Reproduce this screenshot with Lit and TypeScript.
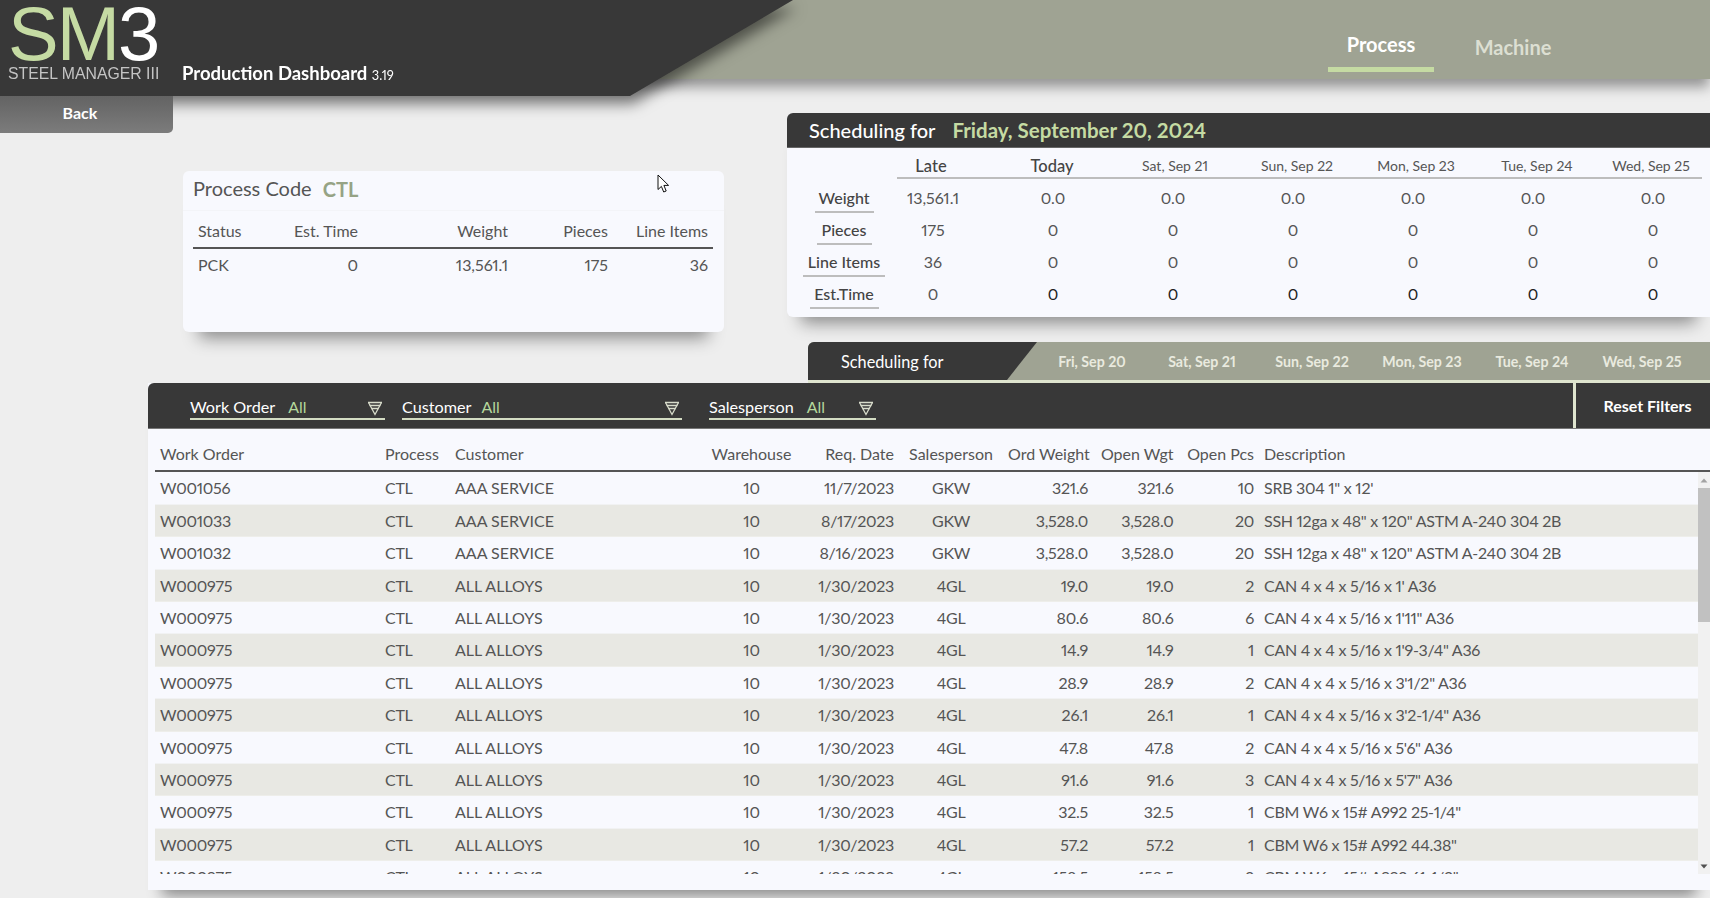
import {html, css, LitElement, svg} from 'lit';
import {customElement} from 'lit/decorators.js';

interface WorkRow {
  order: string;
  customer: string;
  date: string;
  person: string;
  ord: string;
  pcs: string;
  desc: string;
}

const aaa = 'AAA SERVICE';
const all = 'ALL ALLOYS';
const ssh = 'SSH 12ga x 48" x 120" ASTM A-240 304 2B';

const rows: WorkRow[] = [
  {order: 'W001056', customer: aaa, date: '11/7/2023', person: 'GKW', ord: '321.6', pcs: '10', desc: 'SRB 304 1" x 12\''},
  {order: 'W001033', customer: aaa, date: '8/17/2023', person: 'GKW', ord: '3,528.0', pcs: '20', desc: ssh},
  {order: 'W001032', customer: aaa, date: '8/16/2023', person: 'GKW', ord: '3,528.0', pcs: '20', desc: ssh},
  {order: 'W000975', customer: all, date: '1/30/2023', person: '4GL', ord: '19.0', pcs: '2', desc: 'CAN 4 x 4 x 5/16 x 1\' A36'},
  {order: 'W000975', customer: all, date: '1/30/2023', person: '4GL', ord: '80.6', pcs: '6', desc: 'CAN 4 x 4 x 5/16 x 1\'11" A36'},
  {order: 'W000975', customer: all, date: '1/30/2023', person: '4GL', ord: '14.9', pcs: '1', desc: 'CAN 4 x 4 x 5/16 x 1\'9-3/4" A36'},
  {order: 'W000975', customer: all, date: '1/30/2023', person: '4GL', ord: '28.9', pcs: '2', desc: 'CAN 4 x 4 x 5/16 x 3\'1/2" A36'},
  {order: 'W000975', customer: all, date: '1/30/2023', person: '4GL', ord: '26.1', pcs: '1', desc: 'CAN 4 x 4 x 5/16 x 3\'2-1/4" A36'},
  {order: 'W000975', customer: all, date: '1/30/2023', person: '4GL', ord: '47.8', pcs: '2', desc: 'CAN 4 x 4 x 5/16 x 5\'6" A36'},
  {order: 'W000975', customer: all, date: '1/30/2023', person: '4GL', ord: '91.6', pcs: '3', desc: 'CAN 4 x 4 x 5/16 x 5\'7" A36'},
  {order: 'W000975', customer: all, date: '1/30/2023', person: '4GL', ord: '32.5', pcs: '1', desc: 'CBM W6 x 15# A992 25-1/4"'},
  {order: 'W000975', customer: all, date: '1/30/2023', person: '4GL', ord: '57.2', pcs: '1', desc: 'CBM W6 x 15# A992 44.38"'},
  {order: 'W000975', customer: all, date: '1/30/2023', person: '4GL', ord: '158.5', pcs: '3', desc: 'CBM W6 x 15# A992 61-1/2"'},
];

const schedHead = ['Late', 'Today', 'Sat, Sep 21', 'Sun, Sep 22', 'Mon, Sep 23', 'Tue, Sep 24', 'Wed, Sep 25'];
const tabDays = ['Fri, Sep 20', 'Sat, Sep 21', 'Sun, Sep 22', 'Mon, Sep 23', 'Tue, Sep 24', 'Wed, Sep 25'];
const schedRows = [
  {label: 'Weight', cls: 'w-weight', late: '13,561.1', rest: '0.0'},
  {label: 'Pieces', cls: 'w-pieces', late: '175', rest: '0'},
  {label: 'Line Items', cls: 'w-items', late: '36', rest: '0'},
  {label: 'Est.Time', cls: 'w-time', late: '0', rest: '0'},
];

const funnel = svg`<svg class="funnel" width="16" height="15" viewBox="0 0 16 15" fill="none">
  <path d="M1 1.5h14M2.6 4.5h10.8M4.4 7.5h7.2" stroke="#d8dccb" stroke-width="1.6"/>
  <path d="M1.5 1.5 8 13.5 14.5 1.5" stroke="#d8dccb" stroke-width="1.3"/>
</svg>`;

@customElement('app-root')
export class AppRoot extends LitElement {
  static styles = css`
    :host {
      display: block;
      position: relative;
      width: 1710px;
      height: 898px;
      overflow: hidden;
      background: #eeeeee;
      font-family: Lato, "Open Sans", sans-serif;
      font-variant-numeric: proportional-nums;
      color: #555;
    }
    * { box-sizing: border-box; }

    /* header */
    .header {
      position: relative;
      height: 96px;
      z-index: 3;
    }
    .olive {
      height: 79px;
      background: #9fa393;
      box-shadow: 0 9px 12px -1px rgba(0, 0, 0, 0.38);
      display: flex;
      justify-content: flex-end;
      align-items: flex-start;
    }
    .nav { display: flex; width: 382px; }
    .nav-item {
      height: 72px;
      font-size: 20px;
      font-weight: 700;
      color: #dcdfd2;
      display: flex;
      align-items: center;
      justify-content: center;
      padding-top: 22px;
      width: 106px;
    }
    .nav-item.on {
      color: #fff;
      border-bottom: 5px solid #c5dba3;
      padding-top: 20px;
    }
    .nav-item + .nav-item { margin-left: 26px; }
    .dark-wrap {
      position: absolute;
      left: 0;
      top: 0;
      width: 800px;
      height: 96px;
      filter: drop-shadow(3px 8px 7px rgba(0, 0, 0, 0.5));
    }
    .dark {
      height: 96px;
      background: #383838;
      clip-path: polygon(0 0, 793px 0, 630px 96px, 0 96px);
      display: flex;
      align-items: flex-start;
    }
    .logo { width: 182px; padding-left: 8px; flex: none; }
    .sm3 {
      font-family: "Liberation Sans", Arial, sans-serif;
      font-size: 76px;
      line-height: 66px;
      height: 67px;
      padding-top: 1px;
      letter-spacing: -2px;
      color: #fff;
      white-space: nowrap;
    }
    .sm3 span { color: #c5dba3; }
    .steel {
      font-family: "Liberation Sans", Arial, sans-serif;
      font-size: 15.8px;
      line-height: 14px;
      color: #c4c4c4;
      white-space: nowrap;
    }
    .title {
      margin-top: 62px;
      font-size: 18.5px;
      font-weight: 700;
      color: #fff;
      white-space: nowrap;
      line-height: 22px;
    }
    .title small { font-size: 12.8px; font-weight: 400; margin-left: 0; }

    /* upper part */
    .upper {
      display: grid;
      grid-template-columns: 787px 923px;
      height: 287px;
    }
    .back {
      width: 173px;
      height: 37px;
      background: linear-gradient(#636363, #7c7c7c);
      border-bottom-right-radius: 5px;
      color: #fff;
      font-weight: 700;
      font-size: 16px;
      display: flex;
      align-items: center;
      justify-content: center;
      padding: 0 13px 4px 0;
      position: relative;
      z-index: 4;
    }
    .card {
      margin: 38px 0 0 183px;
      width: 541px;
      height: 161px;
      background: #f8f9fe;
      border-radius: 6px;
      box-shadow: 0 22px 16px -16px rgba(0, 0, 0, 0.42);
    }
    .card-title {
      height: 40px;
      border-bottom: 1px solid #f3f4f8;
      padding: 0 10px 6px;
      display: flex;
      align-items: center;
      gap: 11px;
      font-size: 20px;
    }
    .card-title b { color: #96a385; font-weight: 700; padding-top: 2px; }
    .card-grid {
      display: grid;
      grid-template-columns: 90px 80px 150px 100px 100px;
      margin: 10px 11px 0 10px;
      font-size: 16px;
      line-height: 20px;
    }
    .card-grid div { padding: 0 5px; text-align: right; }
    .card-grid .l { text-align: left; }
    .card-rule {
      grid-column: 1 / -1;
      height: 2px;
      background: #555;
      margin: 6px 0 6px;
    }
    .right { padding-top: 17px; }
    .sched {
      height: 204px;
      background: #f8f9fe;
      border-radius: 6px 0 0 6px;
      box-shadow: 0 20px 16px -14px rgba(0, 0, 0, 0.42);
    }
    .sched-title {
      height: 35px;
      background: #383838;
      border-radius: 6px 0 0 0;
      border-bottom: 1px solid #666;
      color: #fff;
      font-size: 20px;
      font-weight: 500;
      display: flex;
      align-items: center;
      gap: 17px;
      padding: 0 0 1px 22px;
    }
    .sched-title span { color: #c5dba3; font-weight: 700; font-size: 20.5px; }
    .sched-head {
      display: grid;
      grid-template-columns: 120px 122px 124px 120px 118px 124px 104px;
      margin-left: 84px;
      height: 29px;
      align-items: end;
      text-align: center;
      font-size: 14px;
      padding-bottom: 1px;
      line-height: 20px;
    }
    .sched-head .big { font-size: 16.5px; font-weight: 500; color: #444; }
    .sched-rule {
      height: 2px;
      background: #bdbdbd;
      margin: 0 8px 2px 110px;
    }
    .sched-row {
      display: grid;
      grid-template-columns: 86px 120px 120px 120px 120px 120px 120px 120px;
      height: 32px;
      align-items: center;
      text-align: center;
      font-size: 16px;
    }
    .sched-label {
      justify-self: center;
      align-self: end;
      margin-left: 28px;
      font-weight: 500;
      color: #444;
      border-bottom: 2px solid #bdbdbd;
      line-height: 22px;
      padding-bottom: 2px;
      text-align: center;
      white-space: nowrap;
    }
    .w-weight { width: 59px; }
    .w-pieces { width: 55px; }
    .w-items { width: 82px; }
    .w-time { width: 69px; }
    .sched-row.strong .v { color: #222; }
    .tabs {
      margin: 25px 0 0 21px;
      height: 41px;
      background: #9fa393;
      border-bottom: 3px solid #dfe5cf;
      border-radius: 6px 0 0 0;
      display: flex;
    }
    .tab-lead {
      width: 229px;
      background: #383838;
      clip-path: polygon(0 0, 229px 0, 199px 38px, 0 38px);
      border-radius: 6px 0 0 0;
      color: #fff;
      font-size: 16.3px;
      display: flex;
      align-items: center;
      padding-left: 33px;
      flex: none;
    }
    .tab-day {
      width: 110px;
      text-align: center;
      color: #e9eadf;
      font-weight: 700;
      font-size: 14.2px;
      line-height: 40px;
      white-space: nowrap;
      flex: none;
    }

    /* work order panel */
    .panel {
      margin-left: 148px;
      height: 507px;
      background: #f8f9fe;
      box-shadow: 0 20px 14px -14px rgba(0, 0, 0, 0.42);
    }
    .filters {
      height: 46px;
      background: #383838;
      border-radius: 6px 0 0 0;
      border-bottom: 1px solid #777;
      display: flex;
      align-items: stretch;
      color: #fff;
    }
    .filter {
      margin-top: 12px;
      height: 25px;
      border-bottom: 2px solid #d3dcc3;
      display: flex;
      align-items: center;
      font-size: 16.2px;
      position: relative;
      white-space: nowrap;
    }
    .filter em {
      font-style: normal;
      color: #b4d79b;
      margin-left: 13px;
      font-size: 16px;
    }
    .f-customer em { margin-left: 10px; }
    .funnel { position: absolute; right: 2px; top: 6px; }
    .f-order { margin-left: 42px; width: 195px; }
    .f-customer { margin-left: 17px; width: 280px; }
    .f-person { margin-left: 27px; width: 167px; }
    .reset {
      margin-left: auto;
      width: 137px;
      border-left: 3px solid #dfe5cf;
      display: flex;
      align-items: center;
      justify-content: center;
      padding-left: 9px;
      font-weight: 700;
      font-size: 16px;
    }
    .cols {
      display: grid;
      grid-template-columns: 225px 70px 252px 99px 98px 104px 90px 85.5px 80.5px 1fr;
      font-size: 16px;
      white-space: nowrap;
    }
    .cols > div { padding: 0 5px; }
    .r { text-align: right; }
    .c { text-align: center; }
    .table-head {
      margin-left: 7px;
      height: 43px;
      align-items: center;
      padding-top: 8px;
      border-bottom: 2px solid #555;
    }
    .scroll {
      display: flex;
      height: 402px;
      overflow: hidden;
      margin-left: 7px;
      margin-top: 0.4px;
    }
    .body { width: 1543px; overflow: hidden; }
    .row {
      height: 32.4px;
      line-height: 32px;
      letter-spacing: -0.28px;
      border-bottom: 1px solid #f1f2f3;
    }
    .row .name { letter-spacing: 0; }
    .row.alt { background: #e8e8e3; border-bottom-color: #eeeeea; }
    .bar {
      width: 12px;
      height: 402px;
      background: #f1f1f1;
      display: flex;
      flex-direction: column;
      align-items: center;
      flex: none;
    }
    .bar .arrow { height: 16px; display: flex; align-items: center; justify-content: center; flex: none; }
    .thumb { height: 134px; width: 12px; background: #c1c1c1; flex: none; }
    .spacer { flex: 1; }

    .cursor { position: absolute; left: 657px; top: 174px; z-index: 9; }
  `;

  render() {
    return html`
      <div class="header">
        <div class="olive">
          <div class="nav">
            <div class="nav-item on">Process</div>
            <div class="nav-item">Machine</div>
          </div>
        </div>
        <div class="dark-wrap">
          <div class="dark">
            <div class="logo">
              <div class="sm3"><span>SM</span>3</div>
              <div class="steel">STEEL MANAGER III</div>
            </div>
            <div class="title">Production Dashboard <small>3.19</small></div>
          </div>
        </div>
      </div>

      <div class="upper">
        <div>
          <div class="back">Back</div>
          <div class="card">
            <div class="card-title">Process Code <b>CTL</b></div>
            <div class="card-grid">
              <div class="l">Status</div><div>Est. Time</div><div>Weight</div><div>Pieces</div><div>Line Items</div>
              <div class="card-rule"></div>
              <div class="l">PCK</div><div>0</div><div>13,561.1</div><div>175</div><div>36</div>
            </div>
          </div>
        </div>
        <div class="right">
          <div class="sched">
            <div class="sched-title">Scheduling for <span>Friday, September 20, 2024</span></div>
            <div class="sched-head">
              ${schedHead.map((h, i) => html`<div class=${i < 2 ? 'big' : ''}>${h}</div>`)}
            </div>
            <div class="sched-rule"></div>
            ${schedRows.map((r, i) => html`
              <div class="sched-row ${i === 3 ? 'strong' : ''}">
                <div class="sched-label ${r.cls}">${r.label}</div>
                <div>${r.late}</div>
                ${[0, 1, 2, 3, 4, 5].map(() => html`<div class="v">${r.rest}</div>`)}
              </div>`)}
          </div>
          <div class="tabs">
            <div class="tab-lead">Scheduling for</div>
            ${tabDays.map(d => html`<div class="tab-day">${d}</div>`)}
          </div>
        </div>
      </div>

      <div class="panel">
        <div class="filters">
          <div class="filter f-order">Work Order<em>All</em>${funnel}</div>
          <div class="filter f-customer">Customer<em>All</em>${funnel}</div>
          <div class="filter f-person">Salesperson<em>All</em>${funnel}</div>
          <div class="reset">Reset Filters</div>
        </div>
        <div class="cols table-head">
          <div>Work Order</div><div>Process</div><div>Customer</div><div class="c">Warehouse</div>
          <div class="r">Req. Date</div><div class="c">Salesperson</div><div class="r">Ord Weight</div>
          <div class="r">Open Wgt</div><div class="r">Open Pcs</div><div>Description</div>
        </div>
        <div class="scroll">
          <div class="body">
            ${rows.map((r, i) => html`
              <div class="cols row ${i % 2 ? 'alt' : ''}">
                <div>${r.order}</div><div>CTL</div><div class="name">${r.customer}</div><div class="c">10</div>
                <div class="r">${r.date}</div><div class="c">${r.person}</div><div class="r">${r.ord}</div>
                <div class="r">${r.ord}</div><div class="r">${r.pcs}</div><div>${r.desc}</div>
              </div>`)}
          </div>
          <div class="bar">
            <div class="arrow"><svg width="8" height="5" viewBox="0 0 8 5"><path d="M4 0.5 7.5 4.5H.5z" fill="#a3a3a3"/></svg></div>
            <div class="thumb"></div>
            <div class="spacer"></div>
            <div class="arrow"><svg width="8" height="5" viewBox="0 0 8 5"><path d="M.5 .5H7.5L4 4.5z" fill="#505050"/></svg></div>
          </div>
        </div>
      </div>

      <svg class="cursor" width="13" height="20" viewBox="0 0 13 20">
        <path d="M1 1V15.5L4.4 12.4 6.7 18 9.2 17 6.9 11.4H11.6z" fill="#fff" stroke="#111" stroke-width="1"/>
      </svg>
    `;
  }
}
